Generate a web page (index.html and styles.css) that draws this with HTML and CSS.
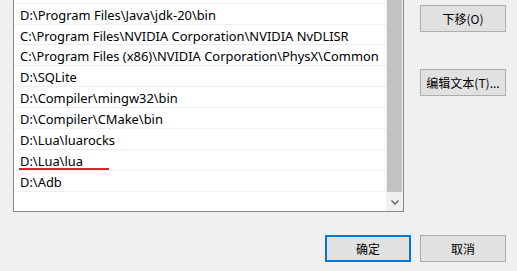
FILE: index.html
```html
<!DOCTYPE html>
<html lang="zh-CN">
<head>
<meta charset="utf-8">
<title>编辑环境变量</title>
<link rel="stylesheet" href="styles.css">
</head>
<body>
<div class="dialog">
  <div class="top">
    <div class="listbox">
      <div class="rows">
        <div class="rows-inner">
          <div class="row"></div>
          <div class="row">D:\Program Files\Java\jdk-20\bin</div>
          <div class="row">C:\Program Files\NVIDIA Corporation\NVIDIA NvDLISR</div>
          <div class="row">C:\Program Files (x86)\NVIDIA Corporation\PhysX\Common</div>
          <div class="row">D:\SQLite</div>
          <div class="row">D:\Compiler\mingw32\bin</div>
          <div class="row">D:\Compiler\CMake\bin</div>
          <div class="row">D:\Lua\luarocks</div>
          <div class="row marked">D:\Lua\lua<span class="underline"></span></div>
          <div class="row">D:\Adb</div>
        </div>
      </div>
      <div class="scrollbar">
        <div class="thumb"></div>
        <div class="arrow">
          <svg width="8" height="5" viewBox="0 0 8 5"><polyline points="0.5,0.5 4,4 7.5,0.5" fill="none" stroke="#606060" stroke-width="1.4"/></svg>
        </div>
      </div>
    </div>
    <div class="side">
      <button class="btn">下移(O)</button>
      <button class="btn">编辑文本(T)...</button>
    </div>
  </div>
  <div class="footer">
    <button class="btn primary">确定</button>
    <button class="btn">取消</button>
  </div>
</div>
</body>
</html>
```
FILE: styles.css
```css
html, body {
  margin: 0;
  padding: 0;
  background: #f0f0f0;
}
.dialog {
  width: 517px;
  height: 271px;
  overflow: hidden;
  font-family: "Noto Sans", "Noto Sans CJK SC", sans-serif;
  font-size: 12.9px;
  color: #000;
}
.top {
  display: flex;
  align-items: flex-start;
}
.listbox {
  margin-left: 13px;
  width: 391px;
  height: 212px;
  box-sizing: border-box;
  border: 1px solid #828790;
  border-top: none;
  background: #fff;
  display: flex;
}
.rows {
  flex: 1;
  overflow: hidden;
}
.rows-inner {
  margin-top: -17.2px;
}
.row {
  position: relative;
  box-sizing: border-box;
  height: 20.9px;
  line-height: 20px;
  padding-left: 6px;
  padding-top: 1px;
  border-bottom: 1px solid #eeeeee;
  white-space: nowrap;
}
.underline {
  position: absolute;
  left: 5px;
  bottom: 0;
  width: 90px;
  height: 2px;
  background: #e0202a;
}
.scrollbar {
  width: 17px;
  background: #f0f0f0;
  display: flex;
  flex-direction: column;
}
.thumb {
  height: 192px;
  margin: 0 1px;
  background: #c2c2c2;
}
.arrow {
  flex: 1;
  display: flex;
  align-items: center;
  justify-content: center;
  padding-top: 1px;
}
.arrow svg {
  display: block;
}
.side {
  margin-left: 16px;
  padding-top: 5px;
  display: flex;
  flex-direction: column;
  gap: 37px;
}
.btn {
  width: 86px;
  height: 27px;
  box-sizing: border-box;
  background: #e1e1e1;
  border: 1px solid #adadad;
  border-radius: 0;
  font-family: "Noto Sans CJK SC", "Noto Sans", sans-serif;
  font-size: 12px;
  color: #000;
  padding: 0;
  margin: 0;
}
.btn.primary {
  border: 2px solid #0078d7;
}
.footer {
  margin-top: 23px;
  display: flex;
  justify-content: flex-end;
  gap: 9px;
  padding-right: 11px;
}
```
